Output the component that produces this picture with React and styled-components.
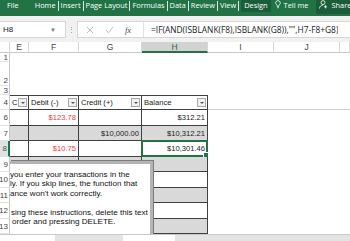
import React from "react";
import styled, { createGlobalStyle } from "styled-components";

const GlobalStyle = createGlobalStyle`
  html, body {
    margin: 0;
    padding: 0;
    background: #ffffff;
  }
  body {
    width: 350px;
    height: 241px;
    overflow: hidden;
    font-family: "Liberation Sans", Arial, sans-serif;
  }
  * {
    box-sizing: border-box;
  }
`;

const COLS = "10px 19px 50px 63px 66px 66px 66px 1fr";

const Ribbon = styled.div`
  height: 16px;
  background: #217346;
  display: flex;
  align-items: flex-start;
  color: #ffffff;
  font-family: "Open Sans", "Noto Sans", sans-serif;
  font-size: 7.4px;
  line-height: 11px;
  white-space: nowrap;
  overflow: hidden;
`;

const Tab = styled.div`
  height: ${(p) => (p.$tall ? 14 : 12)}px;
  padding: 0 ${(p) => p.$pad ?? 2}px;
  margin-left: ${(p) => p.$ml ?? 0}px;
  background: ${(p) => (p.$active ? "#1a5e39" : "transparent")};
  display: flex;
  align-items: flex-start;
  gap: 3px;
`;

const Sep = styled.div`
  flex: none;
  width: 1px;
  height: 10px;
  margin-top: 1px;
  background: rgba(255, 255, 255, 0.85);
`;

const FormulaBar = styled.div`
  height: 26px;
  background: #f1f1f1;
  display: flex;
  align-items: flex-start;
  padding-top: 5px;
  font-size: 8px;
  color: #222;
`;

const NameBox = styled.div`
  width: 66px;
  height: 17px;
  background: #ffffff;
  border: 1px solid #d6d6d6;
  border-left: none;
  display: flex;
  align-items: center;
  justify-content: space-between;
  padding: 0 9px 0 3px;
`;

const Caret = styled.span`
  font-size: 6px;
  color: #7a7a7a;
`;

const Dots = styled.div`
  width: 11px;
  height: 17px;
  display: flex;
  flex-direction: column;
  align-items: center;
  justify-content: center;
  gap: 1.5px;

  span {
    width: 1px;
    height: 1px;
    background: #a8a8a8;
  }
`;

const FuncBox = styled.div`
  flex: 1;
  height: 17px;
  background: #ffffff;
  border: 1px solid #d6d6d6;
  border-right: none;
  display: flex;
  align-items: center;
`;

const FuncButtons = styled.div`
  width: 66px;
  height: 100%;
  display: flex;
  align-items: center;
  padding-left: 8px;
  gap: 11px;
  border-right: 1px solid #e2e2e2;
`;

const Fx = styled.span`
  font-family: "Liberation Serif", serif;
  font-style: italic;
  font-size: 8.5px;
  color: #444;
`;

const Formula = styled.div`
  padding-left: 7px;
  white-space: nowrap;
  overflow: hidden;
  font-family: "Open Sans", "Noto Sans", sans-serif;
  font-size: 8.4px;
`;

const Row = styled.div`
  display: grid;
  grid-template-columns: ${COLS};
  height: ${(p) => p.$h}px;
`;

const ColHead = styled.div`
  display: flex;
  align-items: center;
  justify-content: center;
  font-size: 8.5px;
  color: ${(p) => (p.$sel ? "#1e6b41" : "#444")};
  background: ${(p) => (p.$sel ? "#d2d2d2" : "#ffffff")};
  border-right: 1px solid #d8d8d8;
  border-bottom: ${(p) => (p.$sel ? "2px solid #217346" : "1px solid #c8c8c8")};
  overflow: hidden;
`;

const RowHead = styled.div`
  display: flex;
  align-items: ${(p) => (p.$bottom ? "flex-end" : "center")};
  justify-content: flex-end;
  padding-right: 1px;
  font-size: 8px;
  line-height: 9px;
  color: ${(p) => (p.$sel ? "#1e6b41" : "#444")};
  background: ${(p) => (p.$sel ? "#e1e1e1" : "#ffffff")};
  border-right: ${(p) => (p.$sel ? "2px solid #217346" : "1px solid #c8c8c8")};
  border-bottom: 1px solid #e2e2e2;
  overflow: hidden;
`;

const Cell = styled.div`
  position: relative;
  display: flex;
  align-items: center;
  justify-content: ${(p) => (p.$head ? "space-between" : "flex-end")};
  padding: 0 ${(p) => (p.$head ? 1 : 2)}px 0 ${(p) => (p.$head ? 2 : 0)}px;
  font-size: 7.6px;
  color: ${(p) => (p.$red ? "#f03c3c" : "#222")};
  background: ${(p) => (p.$band ? "#d9d9d9" : "#ffffff")};
  border-right: ${(p) => (p.$table ? "1px solid #404040" : "none")};
  border-bottom: ${(p) =>
    p.$table ? "1px solid #404040" : p.$line ? "1px solid #d2d2d2" : "none"};
  border-top: ${(p) => (p.$top ? "1px solid #404040" : "none")};
  white-space: nowrap;
  overflow: visible;
`;

const Selected = styled.div`
  position: absolute;
  inset: -1px;
  border: 2px solid #217346;
  pointer-events: none;

  &::after {
    content: "";
    position: absolute;
    right: -3px;
    bottom: -3px;
    width: 4px;
    height: 4px;
    background: #217346;
    border: 1px solid #ffffff;
  }
`;

const Drop = styled.span`
  flex: none;
  width: 9px;
  height: 9px;
  background: #f1f1f1;
  border: 1px solid #a9a9a9;
  display: flex;
  align-items: center;
  justify-content: center;

  &::before {
    content: "";
    border-left: 2px solid transparent;
    border-right: 2px solid transparent;
    border-top: 2px solid #555;
  }
`;

const Body = styled.div`
  position: relative;
  height: 181px;
  overflow: hidden;
`;

const TextBox = styled.div`
  position: absolute;
  left: 10px;
  top: 108px;
  width: 143px;
  height: 110px;
  background: #ffffff;
  border-top: 3px solid #b4b4b4;
  border-right: 3px solid #b4b4b4;
  box-shadow: 1px -1px 0 #7d7d7d;
  padding: 6px 0 0 0;
  font-size: 8.1px;
  line-height: 9.4px;
  color: #111;
  white-space: nowrap;
  overflow: hidden;
`;

const Line = styled.div`
  height: 9.4px;
  padding-left: ${(p) => p.$indent || 0}px;
`;

const BottomBar = styled.div`
  height: 7px;
  display: flex;
  background: #e4e4e4;
  border-top: 1px solid #c9c9c9;
`;

const SheetTab = styled.div`
  width: ${(p) => p.$w}px;
  margin-left: ${(p) => p.$ml || 0}px;
  background: #ffffff;
`;

function Bulb() {
  return (
    <svg width="6" height="9" viewBox="0 0 6 9" fill="none" stroke="#fff" strokeWidth="0.8">
      <path d="M3 0.6a2.3 2.3 0 0 0-1.4 4.1c.4.3.6.7.6 1.1v.6h1.6v-.6c0-.4.2-.8.6-1.1A2.3 2.3 0 0 0 3 .6z" />
      <path d="M2.2 7.7h1.6" />
    </svg>
  );
}

function Person() {
  return (
    <svg width="9" height="9" viewBox="0 0 9 9" fill="none" stroke="#fff" strokeWidth="0.8">
      <circle cx="4" cy="2.6" r="2" />
      <path d="M0.5 8.5c0-2 1.6-3.4 3.5-3.4" />
      <path d="M6.5 5.2v3.2M4.9 6.8h3.2" />
    </svg>
  );
}

const rows = [
  { n: "1", h: 9 },
  { n: "2", h: 24, bottom: true },
  { n: "3", h: 9 },
  {
    n: "4",
    h: 15,
    header: true,
    cells: ["C", "Debit  (-)", "Credit (+)", "Balance"],
  },
  { n: "6", h: 16, cells: ["", "$123.78", "", "$312.21"], red: [1] },
  { n: "7", h: 15, band: true, cells: ["", "", "$10,000.00", "$10,312.21"] },
  { n: "8", h: 16, sel: true, cells: ["", "$10.75", "", "$10,301.46"], red: [1] },
  { n: "9", h: 15, band: true, cells: ["", "", "", ""] },
  { n: "10", h: 16, cells: ["", "", "", ""] },
  { n: "11", h: 15, band: true, cells: ["", "", "", ""] },
  { n: "12", h: 16, cells: ["", "", "", ""] },
  { n: "13", h: 15, band: true, cells: ["", "", "", ""] },
];

export default function App() {
  return (
    <>
      <GlobalStyle />
      <Ribbon>
        <Tab $pad={0} $ml={7}>File</Tab>
        <Tab $ml={14}>Home</Tab>
        <Sep />
        <Tab>Insert</Tab>
        <Sep />
        <Tab>Page Layout</Tab>
        <Sep />
        <Tab>Formulas</Tab>
        <Sep />
        <Tab>Data</Tab>
        <Sep />
        <Tab>Review</Tab>
        <Sep />
        <Tab>View</Tab>
        <Sep />
        <Tab $active $pad={3} $ml={2}>Design</Tab>
        <Tab $ml={2}>
          <Bulb />
          Tell me
        </Tab>
        <Tab $active $tall $pad={3} $ml={6}>
          <Person />
          Share
        </Tab>
      </Ribbon>

      <FormulaBar>
        <NameBox>
          H8
          <Caret>▼</Caret>
        </NameBox>
        <Dots>
          <span />
          <span />
          <span />
        </Dots>
        <FuncBox>
          <FuncButtons>
            <svg width="8" height="8" viewBox="0 0 8 8" stroke="#b5b5b5" strokeWidth="0.9">
              <path d="M1 1l6 6M7 1L1 7" />
            </svg>
            <svg width="9" height="8" viewBox="0 0 9 8" fill="none" stroke="#b5b5b5" strokeWidth="0.9">
              <path d="M1 4.2l2.4 2.6L8 1" />
            </svg>
            <Fx>fx</Fx>
          </FuncButtons>
          <Formula>=IF(AND(ISBLANK(F8),ISBLANK(G8)),"",H7-F8+G8)</Formula>
        </FuncBox>
      </FormulaBar>

      <Row $h={11}>
        <ColHead />
        <ColHead>E</ColHead>
        <ColHead>F</ColHead>
        <ColHead>G</ColHead>
        <ColHead $sel>H</ColHead>
        <ColHead>I</ColHead>
        <ColHead>J</ColHead>
        <ColHead />
      </Row>

      <Body>
        {rows.map((r) => (
          <Row key={r.n} $h={r.h}>
            <RowHead $sel={r.sel} $bottom={r.bottom}>
              {r.n}
            </RowHead>
            {r.cells
              ? r.cells.map((c, i) => (
                  <Cell
                    key={i}
                    $table
                    $top={r.header}
                    $head={r.header}
                    $band={r.band}
                    $red={r.red && r.red.includes(i)}
                  >
                    {r.header ? (
                      <>
                        <span>{c}</span>
                        <Drop />
                      </>
                    ) : (
                      c
                    )}
                    {r.sel && i === 3 && <Selected />}
                  </Cell>
                ))
              : [0, 1, 2, 3].map((i) => <Cell key={i} />)}
            <Cell $line={r.header} />
            <Cell $line={r.header} />
            <Cell $line={r.header} />
          </Row>
        ))}

        <TextBox>
          <Line>you enter your transactions in the</Line>
          <Line>ly. If you skip lines, the function that</Line>
          <Line>ance won't work correctly.</Line>
          <Line />
          <Line $indent={1}>sing these instructions, delete this text</Line>
          <Line $indent={2}>order and pressing DELETE.</Line>
        </TextBox>
      </Body>

      <BottomBar>
        <SheetTab $w={55} />
        <SheetTab $w={52} $ml={68} />
      </BottomBar>
    </>
  );
}
